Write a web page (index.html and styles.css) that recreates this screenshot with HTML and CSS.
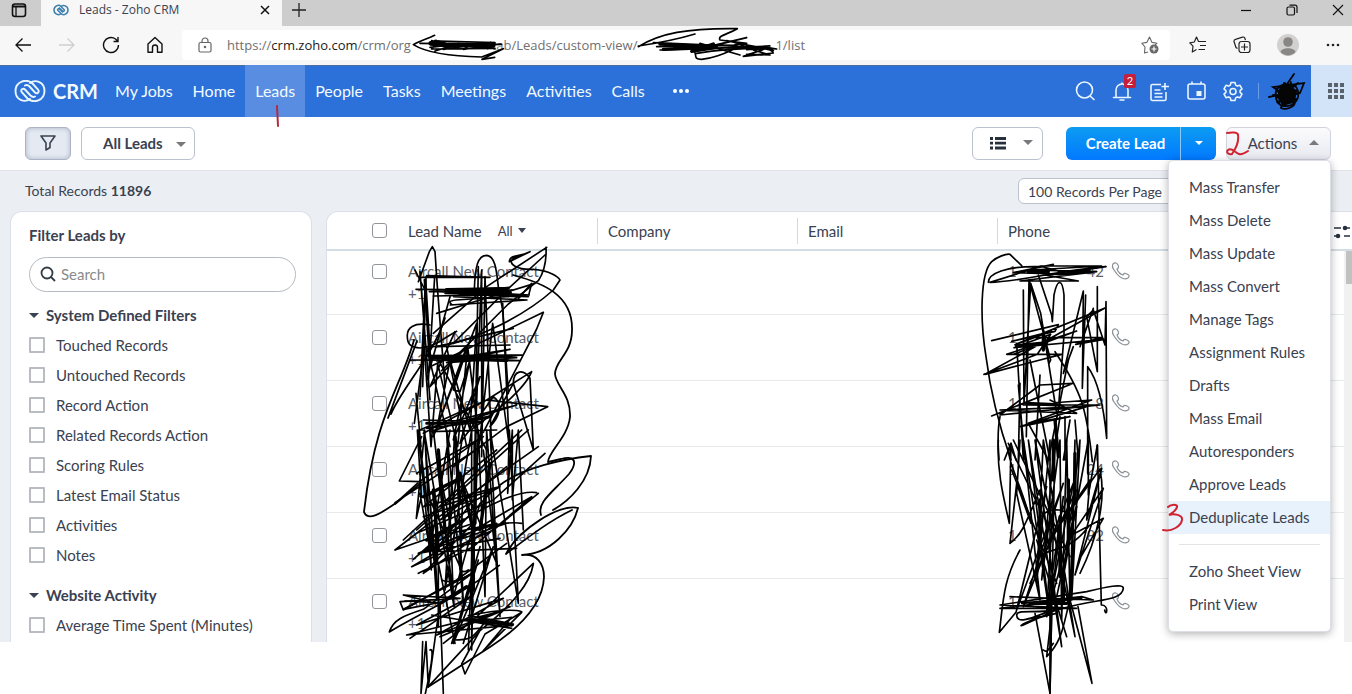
FILE: index.html
```html
<!DOCTYPE html>
<html lang="en">
<head>
  <meta charset="UTF-8">
  <meta name="viewport" content="width=device-width, initial-scale=1.0">
  <title>Leads - Zoho CRM</title>
  <link rel="stylesheet" href="styles.css">
</head>
<body>
  <!-- Browser tabs -->
  <div class="tab-strip">
    <button class="tab-menu" aria-label="Tab actions">
      <svg width="16" height="16" viewBox="0 0 16 16"><rect x="1.5" y="2" width="13" height="12.5" rx="2.5" fill="none" stroke="#111" stroke-width="1.6"/><path d="M2 3.5h12v2H2z" fill="#111"/><path d="M5 5v9" stroke="#111" stroke-width="1.3"/></svg>
    </button>
    <div class="tab">
      <svg class="tab-logo" width="16" height="12" viewBox="0 0 32 22" fill="none" stroke="#3d7fae" stroke-width="3"><path d="M20 16l-7-7c-2-2-5 1-3 3l6 6c5 5 14 1 14-7s-10-12-15-6M12 6l7 7c2 2 5-1 3-3l-6-6C11-1 2 3 2 11s9 12 14 7"/></svg>
      <span class="tab-title">Leads - Zoho CRM</span>
      <button class="tab-close" aria-label="Close tab"><svg width="10" height="10" viewBox="0 0 10 10"><path d="M1 1l8 8M9 1L1 9" stroke="#111" stroke-width="1.5"/></svg></button>
    </div>
    <button class="tab-new" aria-label="New tab"><svg width="16" height="16" viewBox="0 0 16 16"><path d="M8 1v14M1 8h14" stroke="#222" stroke-width="1.3"/></svg></button>
    <div class="window-buttons">
      <button aria-label="Minimize"><svg width="12" height="12" viewBox="0 0 12 12"><path d="M1 6.500h10" stroke="#111" stroke-width="1.2"/></svg></button>
      <button aria-label="Restore"><svg width="12" height="12" viewBox="0 0 12 12" fill="none" stroke="#111" stroke-width="1.2"><rect x="1" y="3" width="7.500" height="8" rx="1.500"/><path d="M3.500 1.200h5.500a2 2 0 0 1 2 2V9"/></svg></button>
      <button aria-label="Close"><svg width="12" height="12" viewBox="0 0 12 12"><path d="M1 1l10 10M11 1L1 11" stroke="#111" stroke-width="1.1"/></svg></button>
    </div>
  </div>

  <!-- Browser toolbar -->
  <div class="toolbar">
    <div class="toolbar-nav">
      <button aria-label="Back"><svg width="18" height="18" viewBox="0 0 18 18" fill="none" stroke="#111" stroke-width="1.3"><path d="M17 9H2M8.500 2.500L2 9l6.500 6.500"/></svg></button>
      <button aria-label="Forward"><svg width="18" height="18" viewBox="0 0 18 18" fill="none" stroke="#cfcfcf" stroke-width="1.300"><path d="M1 9h15M9.500 2.500L16 9l-6.500 6.500"/></svg></button>
      <button aria-label="Refresh"><svg width="18" height="18" viewBox="0 0 18 18" fill="none" stroke="#111" stroke-width="1.400"><path d="M16.500 9A7.500 7.500 0 1 1 13.500 3L16 5.500M16 1v4.500h-4.500"/></svg></button>
      <button aria-label="Home"><svg width="18" height="18" viewBox="0 0 18 18" fill="none" stroke="#111" stroke-width="1.400"><path d="M2 8l7-6.500L16 8v8.300h-4.500V11.500a2.500 2.500 0 0 0-5 0v4.800H2z" stroke-linejoin="round"/></svg></button>
    </div>
    <div class="address">
      <svg width="14" height="16" viewBox="0 0 14 16" fill="none" stroke="#666" stroke-width="1.200"><rect x="1" y="5.500" width="12" height="9.500" rx="1.500"/><path d="M4 5.500V4a3 3 0 0 1 6 0v1.500"/><circle cx="7" cy="10" r=".7" fill="#666"/></svg>
      <div class="url" role="textbox" aria-label="Address" contenteditable="true" spellcheck="false">https://<span class="url-host">crm.zoho.com</span>/crm/org<span class="url-gap"></span>/tab/Leads/custom-view/<span class="url-gap url-gap-wide"></span>1/list</div>
      <button aria-label="Add to favorites"><svg width="18" height="18" viewBox="0 0 18 18" fill="none" stroke="#666" stroke-width="1.100"><path d="M7 16l-3.500 1L4 11 .8 7.200l5-.8L8.500 1l2.500 5.400 5 .8-2 2" stroke-linejoin="round"/><circle cx="13" cy="13" r="4.500" fill="#666" stroke="none"/><path d="M13 10.500v5M10.500 13h5" stroke="#fff" stroke-width="1.200"/></svg></button>
    </div>
    <div class="toolbar-actions">
      <button aria-label="Favorites"><svg width="18" height="18" viewBox="0 0 18 18" fill="none" stroke="#222" stroke-width="1.200"><path d="M12 5.500H9.500L7.500 1 5.300 6 .8 6.800 4 10.200 3.300 16l4.200-2.500M10.500 5.500H17M11 9.500h6M9.500 13.500H16" stroke-linejoin="round"/></svg></button>
      <button aria-label="Collections"><svg width="18" height="18" viewBox="0 0 18 18" fill="none" stroke="#222" stroke-width="1.200"><path d="M4.500 12.500L3 11.500 1 5.500a2 2 0 0 1 1.500-2.200l7-2.200a2 2 0 0 1 2.500 1.500l.4 1.600"/><rect x="6" y="5.500" width="11" height="11" rx="2.500"/><path d="M11.500 7.500v7M8 11h7"/></svg></button>
      <button aria-label="Profile"><svg width="22" height="22" viewBox="0 0 22 22"><circle cx="11" cy="11" r="11" fill="#d3d1cf"/><circle cx="11" cy="8" r="4.800" fill="#898785"/><path d="M3.500 18c1-5 14-5 15 0-4 4.500-11 4.500-15 0z" fill="#898785"/></svg></button>
      <button aria-label="Settings and more"><svg width="16" height="4" viewBox="0 0 16 4" fill="#222"><circle cx="3" cy="2" r="1.300"/><circle cx="8" cy="2" r="1.300"/><circle cx="13" cy="2" r="1.300"/></svg></button>
    </div>
  </div>

  <!-- CRM header -->
  <header class="crm-header">
    <div class="brand">
      <svg width="32" height="22" viewBox="0 0 32 22" fill="none" stroke="#e9f8ff" stroke-width="1.900" stroke-linecap="round"><path d="M21 16.500c-2 1-3 .5-4.500-1L11 9.500c-2-2-5 .5-3 3l5.500 6c6 5.500 17 2 17-7.500 0-9-9-12-14.500-8"/><path d="M11 5.500c2-1 3-.5 4.500 1l5.500 6c2 2 5-.5 3-3l-5.500-6C12.500-2 1.500 1.500 1.500 11c0 9 9 12 14.500 8"/></svg>
      <span>CRM</span>
    </div>
    <nav class="modules">
      <a href="#">My Jobs</a>
      <a href="#">Home</a>
      <a href="#" class="active">Leads</a>
      <a href="#">People</a>
      <a href="#">Tasks</a>
      <a href="#">Meetings</a>
      <a href="#">Activities</a>
      <a href="#">Calls</a>
      <a href="#" class="more" aria-label="More modules"><svg width="18" height="6" viewBox="0 0 18 6" fill="#fff"><circle cx="3" cy="3" r="2"/><circle cx="9" cy="3" r="2"/><circle cx="15" cy="3" r="2"/></svg></a>
    </nav>
    <div class="header-tools">
      <button aria-label="Search"><svg viewBox="0 0 24 24"><circle cx="11.500" cy="11" r="8"/><path d="M17 17l4.500 4"/></svg></button>
      <button class="bell" aria-label="Notifications"><svg viewBox="0 0 24 24"><path d="M3.500 18.500h17M6 18.500V11a6 6 0 0 1 12 0v7.500M10 21h4M12 4v1" stroke-linecap="round"/></svg><span class="badge">2</span></button>
      <button aria-label="Quick create"><svg viewBox="0 0 24 24"><path d="M14 5.500H5.500A1.500 1.500 0 0 0 4 7v13a1.500 1.500 0 0 0 1.500 1.500h12A1.500 1.500 0 0 0 19 20v-7M7.500 11h6M7.500 14.500h8M7.500 18h8M18 4v7M14.500 7.500H22"/></svg></button>
      <button aria-label="Calendar"><svg viewBox="0 0 24 24"><rect x="4" y="5" width="17" height="15" rx="2"/><path d="M8 2.500V5M17 2.500V5"/><path d="M12.500 12h5v5h-5z" fill="#e9f6ff" stroke="none"/></svg></button>
      <button aria-label="Setup"><svg viewBox="0 0 24 24"><path d="M10 3.500h4l.7 2.600 1.700 1 2.600-.8 2 3.500-1.900 1.800v1.800L21 15.200l-2 3.500-2.600-.8-1.700 1-.7 2.600h-4l-.7-2.600-1.700-1-2.600.8-2-3.500 1.900-1.800v-1.800L3 9.800l2-3.500 2.600.8 1.700-1z" stroke-linejoin="round"/><circle cx="12" cy="12.500" r="3"/></svg></button>
      <span class="tools-line"></span>
      <svg class="avatar" viewBox="0 0 38 40" fill="none" stroke="#050505" stroke-width="1.800" stroke-linecap="round">
        <path d="M1 26l14-3L5 16l31-4-4 10-24 4 22-14M8 20c3-8 20-10 22 0s-6 16-14 15S6 24 9 18c6-8 17-4 18 4s-7 12-12 9-5-14 2-15 11 4 9 10-10 7-13 1M26 3l-9 13M9 20l17 12M12 15l13 15M17 12l8 20M27 14L10 32M29 19L13 36M8 27l19-8M9 31l20-8M13 37c4 2 15 0 14-8M5 24l23 4M16 12l-5 20M23 11l-6 24M11 16l17-1"/>
        <path d="M12 18l10-3 6 6-3 10-10 3-5-8z" fill="#050505"/>
      </svg>
    </div>
    <button class="app-grid" aria-label="All apps"><svg width="18" height="18" viewBox="0 0 18 18" fill="#59616d"><path d="M1 1h4v4H1zM7 1h4v4H7zM13 1h4v4h-4zM1 7h4v4H1zM7 7h4v4H7zM13 7h4v4h-4zM1 13h4v4H1zM7 13h4v4H7zM13 13h4v4h-4z"/></svg></button>
  </header>

  <!-- View bar -->
  <div class="view-bar">
    <button class="filter-toggle" aria-label="Toggle filters"><svg width="18" height="18" viewBox="0 0 18 18" fill="none" stroke="#3a4350" stroke-width="1.600" stroke-linejoin="round"><path d="M2 2h14l-5 7v4.500L7 16V9z"/></svg></button>
    <span class="select-box view-select">
      <select aria-label="View"><option>All Leads</option></select>
    </span>
    <div class="view-actions">
      <button class="layout-btn" aria-label="List layout"><svg width="16" height="14" viewBox="0 0 16 14" fill="#27303c"><path d="M0 1h3v3H0zM5 1h11v3H5zM0 5.800h3v2.800H0zM5 5.800h11v2.800H5zM0 10.500h3v3H0zM5 10.500h11v3H5z"/></svg><i class="caret"></i></button>
      <div class="create">
        <button class="create-main">Create Lead</button><button class="create-more" aria-label="More create options"><i class="caret"></i></button>
      </div>
      <div class="actions">
        <button class="actions-btn">Actions <i class="caret caret-up"></i></button>
        <svg class="mark mark-two" width="24" height="28" viewBox="0 0 24 28"><path d="M2 3c5-1 11-1 11 2 1 6-1 12-6 19-4 1-6-2-4-4 4-3 7 3 11 4 3 1 6-1 9-3"/></svg>
        <ul class="menu">
          <li><a href="#">Mass Transfer</a></li>
          <li><a href="#">Mass Delete</a></li>
          <li><a href="#">Mass Update</a></li>
          <li><a href="#">Mass Convert</a></li>
          <li><a href="#">Manage Tags</a></li>
          <li><a href="#">Assignment Rules</a></li>
          <li><a href="#">Drafts</a></li>
          <li><a href="#">Mass Email</a></li>
          <li><a href="#">Autoresponders</a></li>
          <li><a href="#">Approve Leads</a></li>
          <li><a href="#" class="selected">Deduplicate Leads</a>
            <svg class="mark mark-three" width="24" height="30" viewBox="0 0 24 30"><path d="M7 4c3-3 10-3 9 0-1 4-5 6-8 8 5-2 14 0 13 5-1 6-10 12-19 10"/></svg>
          </li>
          <li class="split"><a href="#">Zoho Sheet View</a></li>
          <li><a href="#">Print View</a></li>
        </ul>
      </div>
    </div>
  </div>

  <!-- Records -->
  <main class="workspace">
    <div class="summary">
      <p>Total Records <b>11896</b></p>
      <span class="select-box page-size">
        <select aria-label="Records per page"><option>100 Records Per Page</option></select>
      </span>
    </div>
    <div class="panels">
      <aside class="filters">
        <h2>Filter Leads by</h2>
        <label class="search">
          <svg width="16" height="16" viewBox="0 0 16 16" fill="none" stroke="#333b45" stroke-width="1.800"><circle cx="7" cy="7" r="5.500"/><path d="M11 11l4 4"/></svg>
          <input type="text" placeholder="Search" aria-label="Search filters">
        </label>
        <h3><i class="caret"></i>System Defined Filters</h3>
        <ul>
          <li><label><input type="checkbox">Touched Records</label></li>
          <li><label><input type="checkbox">Untouched Records</label></li>
          <li><label><input type="checkbox">Record Action</label></li>
          <li><label><input type="checkbox">Related Records Action</label></li>
          <li><label><input type="checkbox">Scoring Rules</label></li>
          <li><label><input type="checkbox">Latest Email Status</label></li>
          <li><label><input type="checkbox">Activities</label></li>
          <li><label><input type="checkbox">Notes</label></li>
        </ul>
        <h3><i class="caret"></i>Website Activity</h3>
        <ul>
          <li><label><input type="checkbox">Average Time Spent (Minutes)</label></li>
        </ul>
      </aside>

      <section class="records">
        <table>
          <colgroup><col class="col-check"><col class="col-text"><col class="col-text"><col class="col-text"><col></colgroup>
          <thead>
            <tr>
              <th><input type="checkbox" aria-label="Select all"></th>
              <th><span>Lead Name <button class="all-btn">All <i class="caret"></i></button></span></th>
              <th><span class="ruled">Company</span></th>
              <th><span class="ruled">Email</span></th>
              <th><span class="ruled">Phone</span></th>
            </tr>
          </thead>
          <tbody>
            <tr><td><input type="checkbox" aria-label="Select lead"></td><td>Aircall New Contact<br>+1</td><td></td><td></td><td><div class="phone"><span>1</span><span>42</span><svg viewBox="0 0 18 18"><path d="M1 2c2-2 4-1 5 1s1 3-1 4c1 3 3 5 6 6 1-2 2-2 4-1s3 2 1 4c-3 2-8 0-11-4S-1 5 1 2z"/></svg></div></td></tr>
            <tr><td><input type="checkbox" aria-label="Select lead"></td><td>Aircall New Contact<br>+1</td><td></td><td></td><td><div class="phone"><span>1</span><span></span><svg viewBox="0 0 18 18"><path d="M1 2c2-2 4-1 5 1s1 3-1 4c1 3 3 5 6 6 1-2 2-2 4-1s3 2 1 4c-3 2-8 0-11-4S-1 5 1 2z"/></svg></div></td></tr>
            <tr><td><input type="checkbox" aria-label="Select lead"></td><td>Aircall New Contact<br>+1</td><td></td><td></td><td><div class="phone"><span>1</span><span>8</span><svg viewBox="0 0 18 18"><path d="M1 2c2-2 4-1 5 1s1 3-1 4c1 3 3 5 6 6 1-2 2-2 4-1s3 2 1 4c-3 2-8 0-11-4S-1 5 1 2z"/></svg></div></td></tr>
            <tr><td><input type="checkbox" aria-label="Select lead"></td><td>Aircall New Contact<br>+1</td><td></td><td></td><td><div class="phone"><span>1</span><span>24</span><svg viewBox="0 0 18 18"><path d="M1 2c2-2 4-1 5 1s1 3-1 4c1 3 3 5 6 6 1-2 2-2 4-1s3 2 1 4c-3 2-8 0-11-4S-1 5 1 2z"/></svg></div></td></tr>
            <tr><td><input type="checkbox" aria-label="Select lead"></td><td>Aircall New Contact<br>+1</td><td></td><td></td><td><div class="phone"><span>1</span><span>82</span><svg viewBox="0 0 18 18"><path d="M1 2c2-2 4-1 5 1s1 3-1 4c1 3 3 5 6 6 1-2 2-2 4-1s3 2 1 4c-3 2-8 0-11-4S-1 5 1 2z"/></svg></div></td></tr>
            <tr><td><input type="checkbox" aria-label="Select lead"></td><td>Aircall New Contact<br>+1</td><td></td><td></td><td><div class="phone"><span>1</span><span></span><svg viewBox="0 0 18 18"><path d="M1 2c2-2 4-1 5 1s1 3-1 4c1 3 3 5 6 6 1-2 2-2 4-1s3 2 1 4c-3 2-8 0-11-4S-1 5 1 2z"/></svg></div></td></tr>
          </tbody>
        </table>
        <button class="columns-btn" aria-label="Manage columns"><svg width="18" height="14" viewBox="0 0 18 14" fill="#27303c" stroke="#27303c" stroke-width="1.500"><path d="M1 3h7M14 3h3M1 11h3M11 11h6"/><circle cx="12" cy="3" r="1.500"/><circle cx="5" cy="11" r="1.500"/></svg></button>
        <div class="scroll-track"><div class="scroll-thumb"></div></div>
      </section>
    </div>
  </main>

  <!-- Pen strokes -->
  <svg class="ink" width="1352" height="694" viewBox="0 0 1352 694" fill="none" stroke="#000" stroke-linecap="round" stroke-linejoin="round" aria-hidden="true">
    <!-- address -->
    <g transform="scale(.3333333) translate(1200 0)" stroke-width="5">
      <path d="M104 106C80 118 60 122 40 134c40 25 110 35 205 37l65-25-64 32 38-6M60 130l245 3-200 5 180-10-170-5-20 24 190-2-110-14-70 22M95 122l45 14-50 6M130 148l80-12-20 12 110-16"/>
      <path stroke-width="14" d="M92 130l60 8-45-12 40 14M120 134l160 2"/>
      <path d="M715 140C780 100 860 84 1012 86c-30 18-60 20-52 34l80 10-35 4M715 138c40-6 110-18 170-36M760 128l340 14 30 5-180-12 90-22-150 35M780 150l330-12-230 10c15 15-5 30 25 30 50-5 80-25 130-45M770 140l240-4-200-2M890 160c60-10 130-15 210-15l-70 24 90-10c-10-20-50-10-80-10M900 130l120 35M980 122l140 30M1060 150l50 15-70-2"/>
      <path stroke-width="10" d="M780 132l140 8-130 8 160-6-75 12 65-22"/>
    </g>
    <!-- lead names, outline -->
    <g stroke-width="1.800">
      <path d="M513 275c30 8 60 20 59 55 0 24-17 30-17 44 1 12 16 21 15 43-2 20-22 35-22 45l13-3c14-4 17 3 8 15-17 19-32 28-28 41"/>
      <path d="M414 340c-12 45-39 74-50 172 4 12 24-4 32-9l22-20M445 318c-12 38-43 70-54 96M417 341L388 418"/>
      <path d="M500 485c24-18 64-26 91-29-1 25-22 45-38 54M578 508c-18-5-60 22-72 46 25-19 45-34 66-44M578 508c-5 21-28 46-56 47 15-2 22 9 22 22-1 30-31 55-54 70l-62 40"/>
    </g>
    <!-- lead names, cross hatching -->
    <g transform="translate(320 200) scale(.3333333)" stroke-width="5">
      <path d="M295 245l33-90 9-15 8 15 7 105 23 300M463 270c2-70 10-104 37-104 28 2 30 55 35 94l13 70 17 250M630 155c-20 15-60 5-62 30l62-30-50 20c-20 15 10 35 60 33 50 4 75 22 80 32l-20 30C600 360 420 440 335 440"/>
      <path d="M680 142L500 260 340 400M678 142c2 40-3 70-23 100l-90 70-200 200M675 165L560 270 400 430M645 250L480 300 350 340M285 210l30 60-15 320M300 215l30 385M318 230l-10 330M344 230l-20 330M390 290l-70 250"/>
      <path d="M300 232h210l-190-5M288 268l290 2-250 5 240-12-210 12 230 15-50-10 90 5-220 15c-40 5 0 15-17 15l230-15-220-10M340 288l270-5-15 12 40-45-10 40-250-10"/>
      <path stroke-width="12" d="M380 270l180-3M420 280l150-2"/>
      <path d="M330 375c-50-10-70 10-68 35 0 30 20 32 38 34 50-5 70-30 110-50M670 337L560 390 330 500M670 337l-20 50-160 310M635 515L500 600 310 700M635 515c-20 50-90 110-190 180M683 620L500 600 300 690M683 620L560 680 400 800M270 480l330 2-290-15 300-2-260 18 220-35-190 40 210-15-230-5M310 660l180 5-170 20 270-70-260 80 200-5M570 435L350 440l230-55"/>
      <path d="M405 395L330 560l110-120-100 270 130-340-20 320-60-210-40 210M475 200l-10 540 20-530v560l10-540 20 520M548 310l20 430-50-370-40 360-35-290-30 300-60-250-20 250-20-300-30 230M430 480l-30 90 20 5 30-95-50 240 80-190-60 200 100-140c30 20 20 60-10 90l70-130c0-40 30-45 50-15l10 215-60-200M288 580l15 160M320 440l70 300M380 440l60 300M350 470l150 280"/>
      <path stroke-width="9" d="M315 240l15 240M335 475h150M380 470l180 12M320 670h90l100-20"/>
    </g>
    <g transform="translate(340 430) scale(.3333333)" stroke-width="5">
      <path d="M232 0l12 200-15 65 25-265 20 420L235 0l60 500L252 0l90 530L280 0l60 500L320 0l50 520L345 0l-30 480L395 0v660L408 0l-10 470L415 0l20 500L440 0l40 560L450 0l85 520L508 0l-5 190L517 0v210L535 0l15 300M330 0l-60 360-30-170M370 0l-40 280-40-200M430 60l40 340-100-240-10 250-90-200 20 300"/>
      <path d="M545 0L190 330M565 0L230 300M245 20L178 153l60 2L430 20 230 130M165 218L430 45M165 222l80-65M615 70L460 210 230 310l-65 50 90-70 340-240M590 188c-50-10-160 40-280 120l-90 80M595 190L460 300 215 410l360-210L400 350 235 430M165 360L400 280l-150 150 220-150-140 30-90 60 260-90M545 280c-60-10-150 20-310 90l245-45M530 355L300 365M500 340L350 450 190 540l-10-25 180-10-170-10 80 20"/>
      <path d="M580 400L400 570l-90 70M580 402c-10 60-60 120-160 200L265 770M195 513l100 5-105 20 210-110-150 110c-60 20-90 30-102 68 100-60 200-100 330-200M200 615l280-70-180 75 210-90-220 85 200-110-260 80 170-90-190 130M200 615l320-30-120-10 115 20-240-40M545 545c-30-10-100 0-160 12l135 25-100-10 95-10-85 100 115-115-110 65-60 120-10-30 60-110"/>
      <path d="M248 635l-5 155 15-155 7 135 35-250 10 270M270 660c15-10 0 70-15 135M335 640l80-250-75 250 120-290-90 290M385 660l15-400M295 590V400l50 240M420 350l-80 280c60 0 60-10 100-60"/>
      <path d="M305 450c20 10 50 5 90-20M360 400c-5 25 10 30 25 20M340 500l80-280M250 260l150-50-120 160 180-190-160 50M470 60l-220 170 230-60-180 100 200-160"/>
      <path stroke-width="10" d="M290 290v110M400 290v190M360 130l35 150M280 180l15 180M400 570l115 15M300 520l80-50M345 20l15 200M405 40v240M295 60l20 240M450 100l-30 200M250 200l100-50M260 330l110-60"/>
    </g>
    <!-- phone numbers -->
    <g transform="translate(960 220) scale(.3333333)" stroke-width="5">
      <path d="M185 137L150 103c-10-3-40 8-55 22C60 160 60 300 78 410c15 120 40 210 75 310M85 187c0-25 50-50 155-47L90 187c80 0 200-35 348-47L300 160l110-5-230 28h175l-100-18 150-10-190-5 210-12H240l90 25-170-5 120-25"/>
      <path d="M235 165l40 120 2 20 5-80c10-50 25-50 30 0v120l-15 200M190 210l2 340 20-360 30 90 25 150 5-10-65-240-8 470M370 213L310 460l30-80M370 215l-3 290 10-280M412 200v255L380 290l20-20 35 105 3-130 2 410c-10-110-30-180-57-215v320M400 265L360 380M285 395c80 120 95 170 112 330"/>
      <path d="M95 362l200-48-10 20-130 30 120-30-110 40 270-110L75 463l230-60-165 0 210-70-190 70M72 463l160-60 40-60-110 40 270-25-85 15 80-20-200 0"/>
      <path d="M95 588l245-98-100 5-120 90 300-30-230 0 205-15-190 70 125-20-150 30 200-60-260 10 230 10-80-40"/>
      <path d="M120 590c-10 50-5 90-3 130M168 720l-15-50-20 50M175 495l20 225M180 490l-5 230M240 465l-15 255M210 420l60 300M170 370l20 350M250 330l40 250M300 590l-20 130M315 590v130M330 600l-20 120M345 600l10 120M325 420l-60 300M205 610l60 110M412 675v45"/>
      <path stroke-width="10" d="M205 155h60M320 155h70M170 378l90-10M250 345v45M200 550l100 5M285 600l10 110"/>
    </g>
    <g transform="translate(960 440) scale(.3333333)" stroke-width="5">
      <path d="M115 0c-5 90 15 170 33 250L153 10c-25 40 30 110 60 240L170 130l-20 180c40-30 50-70 90-160M180 0l-10 160 70 320L190 0l80 530L205 0l100 620L225 0l120 590L250 0l-20 430L270 0v760L285 0l-40 420L300 0l5 540L320 0l10 490L345 0l-10 480L360 0l-50 410L385 0v165L412 15l12 480c25 0 15 40 10 15"/>
      <path d="M180 330C130 420 130 480 118 577l50-60L260 140l-90 370 140-380-120 370 150-370-80 400 90-330-60 270M420 87L260 310l130-190-10 120 45-155-80 320 85-260-95 140 95-50-70 120M420 90c20 90-10 210-60 310M240 230c30-30 90-30 100 20M235 350c40-30 90-10 150-90M145 10L300 330M160 0L330 350M230 300l90 290M155 90L290 430M350 150L210 430"/>
      <path d="M150 470l250 10-35-10-180 20 180-15-245 30 230 0-230-10 260-40c60-15 110-25 110-10-5 40-80 30-180 60-80 20-140 0-140 20 0 40 90-15 130-20l-110 50c-25 10 20-20 100-35l-100 20"/>
      <path d="M225 520l45 240 5-240-15 130c50-50 50-100 70-170l66 250-42-230M250 630c10 10 20-5 30-20M280 180l-20 340 50-350-40 350"/>
      <path stroke-width="10" d="M240 180v130M300 230v180M325 120v180M345 40v150M210 490h110M310 410v80M280 0v120"/>
    </g>
    <path d="M277 106l1 20" stroke="#b52a3c" stroke-width="2"/>
  </svg>
</body>
</html>
```
FILE: styles.css
```css
* {
  box-sizing: border-box;
}

body {
  margin: 0;
  height: 100vh;
  display: flex;
  flex-direction: column;
  position: relative;
  overflow: hidden;
  background: #fff;
  color: #3a4150;
  font-family: Lato, sans-serif;
  font-size: 15px;
}

button,
select,
input {
  font: inherit;
  color: inherit;
}

button {
  padding: 0;
  border: 0;
  background: none;
  display: flex;
  align-items: center;
  justify-content: center;
}

a {
  color: inherit;
  text-decoration: none;
}

ul {
  margin: 0;
  padding: 0;
  list-style: none;
}

/* Browser tabs */
.tab-strip {
  height: 26px;
  flex: none;
  display: flex;
  background: #cdcdcd;
  font-family: "Open Sans", sans-serif;
}

.tab-menu {
  width: 38px;
  padding-bottom: 6px;
}

.tab {
  width: 241px;
  display: flex;
  align-items: center;
  margin-left: 3px;
  padding: 0 12px 7px;
  background: #f7f7f7;
}

.tab-title {
  flex: 1;
  margin-left: 10px;
  font-size: 12px;
}

.tab-new {
  width: 34px;
  padding-bottom: 6px;
}

.window-buttons {
  margin-left: auto;
  display: flex;
  padding-bottom: 6px;
}

.window-buttons button {
  width: 46px;
}

.window-buttons button:last-child {
  width: 28px;
  margin-left: 9px;
}

/* Browser toolbar */
.toolbar {
  height: 39px;
  flex: none;
  display: flex;
  align-items: center;
  padding-bottom: 1px;
  background: #f7f7f7;
}

.toolbar-nav {
  width: 182px;
  display: flex;
  gap: 26px;
  padding-left: 14px;
}

.address {
  flex: 1;
  height: 30px;
  display: flex;
  align-items: center;
  padding: 0 11px 0 16px;
  border-radius: 4px;
  background: #fff;
}

.url {
  flex: 1;
  margin-left: 15px;
  font-family: "Open Sans", sans-serif;
  font-size: 13px;
  color: #707070;
  white-space: nowrap;
}

.url-host {
  color: #1b1b1b;
}

.url-gap {
  display: inline-block;
  width: 76px;
}

.url-gap-wide {
  width: 138px;
}

.toolbar-actions {
  display: flex;
  align-items: center;
  gap: 26px;
  padding: 0 11px 0 19px;
}

/* CRM header */
.crm-header {
  height: 52px;
  flex: none;
  display: flex;
  background: #2c70d9;
  box-shadow: inset 0 1px #4f6f9f;
  color: #f2fbff;
  font-size: 16px;
}

.brand {
  width: 105px;
  display: flex;
  align-items: center;
  gap: 7px;
  padding-left: 14px;
  font-size: 20px;
  font-weight: bold;
}

.modules {
  display: flex;
}

.modules a {
  display: flex;
  align-items: center;
  padding: 0 10px 1px;
}

.modules .active {
  background: #588de2;
}

.modules .more {
  padding: 0 17px;
}

.header-tools {
  margin-left: auto;
  display: flex;
  align-items: center;
  gap: 13px;
  padding-right: 5px;
}

.header-tools button svg {
  width: 24px;
  height: 24px;
  fill: none;
  stroke: #e9f6ff;
  stroke-width: 1.6;
}

.bell {
  position: relative;
}

.badge {
  position: absolute;
  top: -5px;
  right: -2px;
  width: 12px;
  border-radius: 2px;
  background: #c61f3b;
  font-size: 11px;
  line-height: 14px;
}

.tools-line {
  width: 1px;
  height: 16px;
  margin-right: -4px;
  background: #6a9be7;
}

.avatar {
  width: 38px;
  height: 40px;
}

.app-grid {
  width: 41px;
  padding-left: 8px;
  background: #d3e3f8;
}

/* View bar */
.view-bar {
  height: 54px;
  flex: none;
  display: flex;
  align-items: center;
  gap: 10px;
  padding: 0 21px 0 25px;
  border-bottom: 1px solid #e0e4ea;
}

.view-bar button,
.view-bar select {
  height: 33px;
  padding-bottom: 2px;
}

.caret {
  border: 5px solid transparent;
  border-top-color: currentColor;
  border-bottom: 0;
}

.caret-up {
  border-top: 0;
  border-bottom: 5px solid currentColor;
}

.filter-toggle {
  width: 46px;
  border: 1px solid #aab4c5;
  border-radius: 6px;
  background: #e5eaf2;
  box-shadow: inset 0 0 5px #aab4c5;
}

.select-box {
  position: relative;
  display: inline-flex;
}

.select-box::after {
  content: "";
  position: absolute;
  right: 9px;
  top: 50%;
  margin-top: -2px;
  border: 5px solid transparent;
  border-top-color: #77797d;
  border-bottom: 0;
  pointer-events: none;
}

.select-box select {
  appearance: none;
  border: 1px solid #bcc1ce;
  border-radius: 6px;
  background: #fff;
}

.view-bar .view-select select {
  width: 114px;
  padding: 0 21px 2px;
  font-weight: bold;
}

.view-actions {
  margin-left: auto;
  display: flex;
}

.layout-btn {
  width: 71px;
  gap: 17px;
  padding-left: 8px;
  border: 1px solid #bcc1ce;
  border-radius: 6px;
}

.layout-btn .caret,
.actions .caret {
  color: #77797d;
}

.create {
  display: flex;
  margin: 0 10px 0 23px;
  color: #fff;
}

.create button {
  background: linear-gradient(#0c9cf2, #0279ff);
}

.create-main {
  width: 114px;
  padding-left: 5px;
  border-radius: 6px 0 0 6px;
  font-weight: bold;
}

.create-more {
  width: 36px;
  border-left: 1px solid #8bc8fb;
  border-radius: 0 6px 6px 0;
}

.create-more .caret {
  border-width: 4px 4px 0;
}

.actions {
  position: relative;
}

.actions-btn {
  width: 105px;
  gap: 12px;
  padding-left: 10px;
  border: 1px solid #d0d3dd;
  border-radius: 6px;
  background: linear-gradient(#fbfbfd, #e8eaf1);
}

.menu {
  position: absolute;
  z-index: 2;
  top: 33px;
  right: 0;
  width: 163px;
  padding: 10px 0;
  border: 1px solid #dcdfe5;
  border-radius: 5px;
  background: #fff;
  box-shadow: 0 2px 9px rgba(0, 0, 0, 0.3);
}

.menu li {
  position: relative;
}

.menu a {
  display: block;
  padding: 0 20px;
  line-height: 33px;
}

.menu .selected {
  background: #e7f2fd;
}

.menu .split {
  margin-top: 10px;
  padding-top: 11px;
}

.menu .split::before {
  content: "";
  position: absolute;
  top: 0;
  left: 10px;
  right: 10px;
  border-top: 1px solid #e2e4e8;
}

.mark {
  position: absolute;
  fill: none;
  stroke: #d02432;
  stroke-width: 2;
  stroke-linecap: round;
}

.mark-two {
  top: 3px;
  left: -1px;
}

.mark-three {
  top: 2px;
  left: -8px;
}

/* Workspace */
.workspace {
  flex: 1;
  min-height: 0;
  margin-bottom: 52px;
  display: flex;
  flex-direction: column;
  background: #ebeff4;
}

.summary {
  height: 40px;
  flex: none;
  display: flex;
  align-items: center;
  justify-content: space-between;
  padding: 0 149px 0 25px;
  font-size: 14px;
}

.summary p {
  margin: 0;
  padding-bottom: 2px;
}

.page-size select {
  height: 26px;
  width: 185px;
  padding: 0 9px;
}

.panels {
  flex: 1;
  min-height: 0;
  display: flex;
  gap: 14px;
  padding-left: 10px;
}

.filters,
.records {
  border: 1px solid #d9e0ea;
  border-bottom: 0;
  background: #fff;
  overflow: hidden;
}

/* Filters */
.filters {
  width: 302px;
  flex: none;
  padding: 14px 15px 0 18px;
  border-radius: 12px 12px 0 0;
}

.filters h2,
.filters h3 {
  margin: 0;
  font-size: 15px;
  line-height: 18px;
}

.filters h3 {
  display: flex;
  align-items: center;
  gap: 7px;
  margin: 14px 0 6px;
}

.filters ul + h3 {
  margin-top: 16px;
}

.search {
  height: 35px;
  display: flex;
  align-items: center;
  gap: 5px;
  margin: 13px 0 0;
  padding: 0 10px 1px;
  border: 1px solid #b5bac2;
  border-radius: 18px;
}

.search input {
  min-width: 0;
  flex: 1;
  padding: 0;
  border: 0;
  outline: 0;
}

.search input::placeholder {
  color: #8a8a8a;
}

.filters label:not(.search) {
  display: flex;
  align-items: center;
  gap: 11px;
  height: 30px;
}

input[type="checkbox"] {
  appearance: none;
  width: 16px;
  height: 16px;
  margin: 0;
  border: 2px solid #b9bcc0;
  border-radius: 1px;
  background: #fff;
}

/* Records table */
.records {
  position: relative;
  flex: 1;
  border-right: 0;
  border-radius: 12px 0 0 0;
}

table {
  width: 100%;
  table-layout: fixed;
  border-collapse: collapse;
}

.col-check {
  width: 70px;
}

.col-text {
  width: 200px;
}

th {
  height: 38px;
  padding: 0;
  border-bottom: 2px solid #d2dde4;
  font-weight: normal;
  text-align: left;
}

th span {
  display: flex;
  align-items: center;
  height: 26px;
  padding-left: 11px;
}

.ruled {
  padding-left: 10px;
  border-left: 1px solid #d5d9de;
}

.all-btn {
  gap: 5px;
  margin-left: 16px;
  font-size: 13px;
}

.all-btn .caret {
  border-width: 5px 4px 0;
}

td {
  height: 66px;
  padding: 11px 0 0 11px;
  border-bottom: 1px solid #e8e9eb;
  line-height: 22px;
  color: #5b6067;
  vertical-align: top;
}

tbody tr:first-child td {
  height: 64px;
  padding-top: 9px;
}

th:first-child,
td:first-child {
  padding-left: 45px;
}

.records input[type="checkbox"] {
  display: block;
  width: 15px;
  height: 15px;
  border: 1px solid #929599;
  border-radius: 3px;
}

td input[type="checkbox"] {
  margin-top: 4px;
}

.phone {
  display: flex;
  justify-content: space-between;
  width: 122px;
}

.phone span:nth-child(2) {
  margin-left: auto;
  margin-right: 8px;
}

.phone svg {
  width: 18px;
  height: 18px;
  margin-top: 2px;
  fill: none;
  stroke: #8d9298;
  stroke-width: 1.2;
}

.columns-btn {
  position: absolute;
  top: 13px;
  right: 1px;
}

.scroll-track {
  position: absolute;
  top: 39px;
  right: 0;
  bottom: 0;
  width: 8px;
  background: #f1f1f1;
}

.scroll-thumb {
  height: 33px;
  margin-left: 2px;
  background: #c1c1c1;
}

/* Pen strokes sit above the page */
.ink {
  position: absolute;
  top: 0;
  left: 0;
  z-index: 1;
  pointer-events: none;
}
```
